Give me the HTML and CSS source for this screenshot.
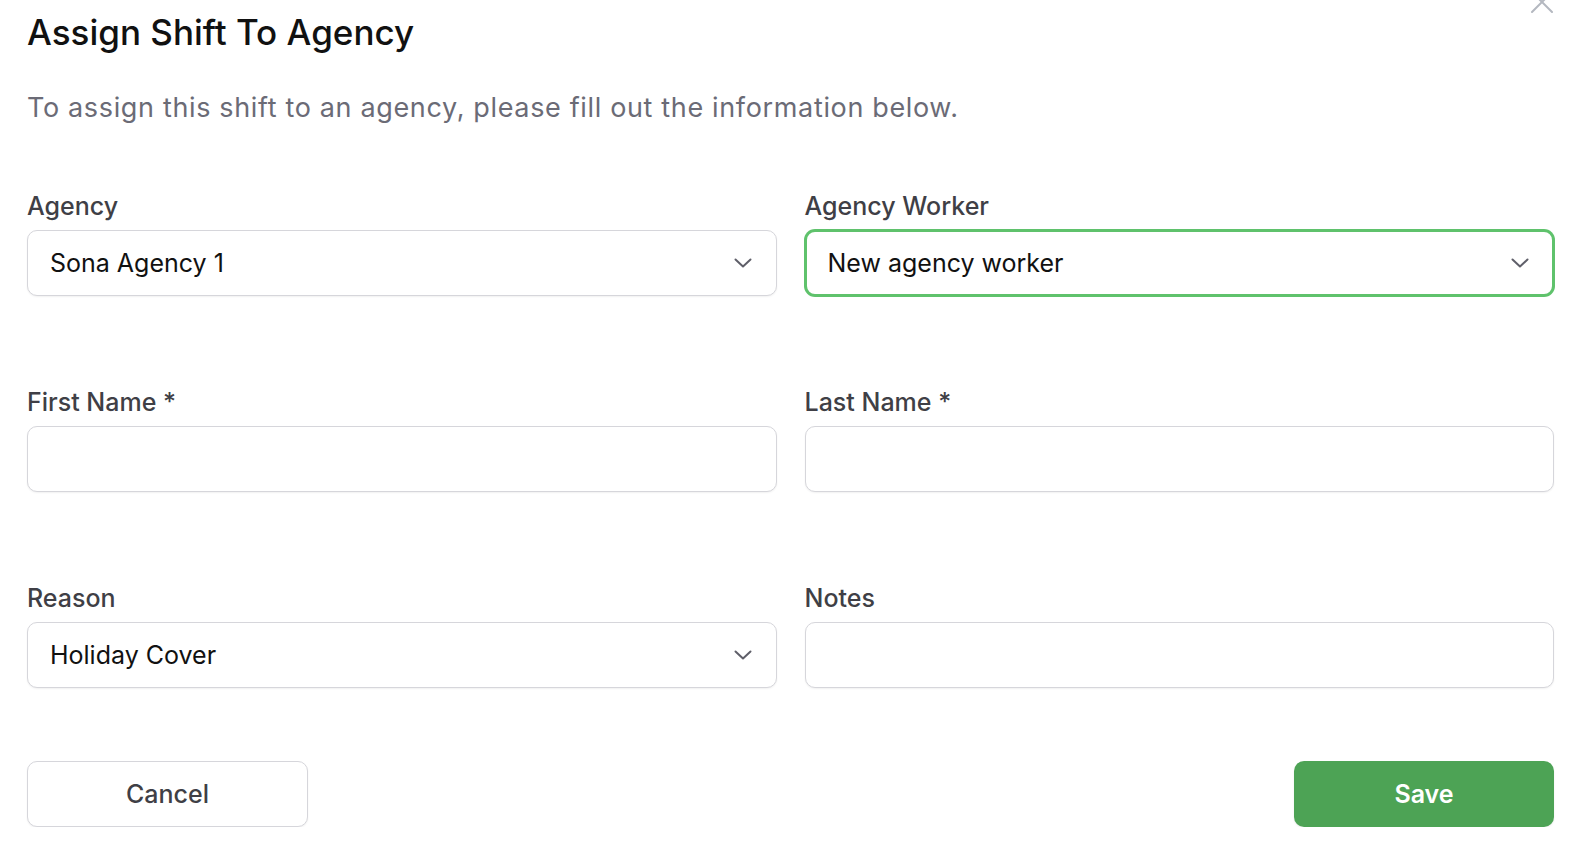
FILE: index.html
```html
<!DOCTYPE html>
<html lang="en">
<head>
    <meta charset="UTF-8">
    <meta name="viewport" content="width=device-width, initial-scale=1.0">
    <title>Assign Shift To Agency</title>
    <link rel="stylesheet" href="styles.css">
</head>
<body>

    <div class="modal">
        <button class="close-btn" type="button" aria-label="Close">
            <svg width="22" height="22" viewBox="0 0 22 22">
                <path d="M1 1 L21 21 M21 1 L1 21" stroke="currentColor" stroke-width="2" stroke-linecap="round" fill="none"/>
            </svg>
        </button>

        <h2 class="modal-title">Assign Shift To Agency</h2>
        <p class="modal-subtitle">To assign this shift to an agency, please fill out the information below.</p>

        <form id="agencyForm" class="form-grid">
            <div class="field">
                <label for="agency">Agency</label>
                <div class="select-box">
                    <span class="select-value">Sona Agency 1</span>
                    <svg class="chevron" width="18" height="10" viewBox="0 0 18 10">
                        <polyline points="1.5,1.5 9,8.5 16.5,1.5" fill="none" stroke="currentColor" stroke-width="2" stroke-linecap="round" stroke-linejoin="round"/>
                    </svg>
                </div>
            </div>

            <div class="field">
                <label for="worker">Agency Worker</label>
                <div class="select-box focused">
                    <span class="select-value">New agency worker</span>
                    <svg class="chevron" width="18" height="10" viewBox="0 0 18 10">
                        <polyline points="1.5,1.5 9,8.5 16.5,1.5" fill="none" stroke="currentColor" stroke-width="2" stroke-linecap="round" stroke-linejoin="round"/>
                    </svg>
                </div>
            </div>

            <div class="field">
                <label for="firstName">First Name *</label>
                <input type="text" id="firstName" class="text-input">
            </div>

            <div class="field">
                <label for="lastName">Last Name *</label>
                <input type="text" id="lastName" class="text-input">
            </div>

            <div class="field">
                <label for="reason">Reason</label>
                <div class="select-box">
                    <span class="select-value">Holiday Cover</span>
                    <svg class="chevron" width="18" height="10" viewBox="0 0 18 10">
                        <polyline points="1.5,1.5 9,8.5 16.5,1.5" fill="none" stroke="currentColor" stroke-width="2" stroke-linecap="round" stroke-linejoin="round"/>
                    </svg>
                </div>
            </div>

            <div class="field">
                <label for="notes">Notes</label>
                <input type="text" id="notes" class="text-input">
            </div>
        </form>

        <div class="actions">
            <button type="button" class="btn btn-cancel">Cancel</button>
            <button type="submit" form="agencyForm" class="btn btn-save">Save</button>
        </div>
    </div>

</body>
</html>
```

FILE: styles.css
```css
body {
    margin: 0;
    font-family: Inter, "Noto Sans", Arial, sans-serif;
    background: #fff;
    color: #111;
}
.modal {
    position: relative;
    padding: 10px 32px 0 27px;
}
.close-btn {
    position: absolute;
    top: -9px;
    right: 33px;
    padding: 0;
    border: none;
    background: none;
    color: #b4b8c0;
    width: 22px;
    height: 22px;
}
.modal-title {
    margin: 0;
    font-size: 35px;
    line-height: 44px;
    font-weight: 500;
    color: #111;
}
.modal-subtitle {
    margin: 38px 0 0;
    font-size: 27px;
    line-height: 32px;
    letter-spacing: 0.65px;
    color: #6b6b76;
}
.form-grid {
    display: grid;
    grid-template-columns: 1fr 1fr;
    column-gap: 28px;
    row-gap: 91px;
    margin-top: 67px;
}
.field label {
    display: block;
    font-size: 25px;
    line-height: 30px;
    font-weight: 500;
    color: #3f3f46;
    margin-bottom: 9px;
}
.select-box, .text-input {
    box-sizing: border-box;
    width: 100%;
    height: 66px;
    border: 1px solid #d6d6db;
    border-radius: 10px;
    background: #fff;
    box-shadow: 0 1px 2px rgba(0, 0, 0, 0.06);
}
.select-box {
    display: flex;
    align-items: center;
    justify-content: space-between;
    padding: 0 24px 0 22px;
}
.select-box.focused {
    border: 2px solid #5fc26c;
    box-shadow: 0 0 0 1px #5fc26c;
    padding: 0 23px 0 21px;
}
.select-value {
    font-size: 25px;
    color: #111;
}
.chevron {
    color: #5f5f69;
}
.text-input {
    display: block;
    padding: 0 22px;
    font-family: inherit;
    font-size: 25px;
    outline: none;
}
.actions {
    display: flex;
    justify-content: space-between;
    margin-top: 73px;
}
.btn {
    height: 66px;
    border-radius: 10px;
    font-family: inherit;
    font-size: 25px;
    cursor: pointer;
}
.btn-cancel {
    width: 281px;
    background: #fff;
    border: 1px solid #d6d6db;
    color: #3f3f46;
    font-weight: 500;
    box-shadow: 0 1px 2px rgba(0, 0, 0, 0.06);
}
.btn-save {
    width: 260px;
    background: #4da355;
    border: none;
    color: #fff;
    font-weight: 600;
    box-shadow: 0 1px 2px rgba(0, 0, 0, 0.08);
}
```
